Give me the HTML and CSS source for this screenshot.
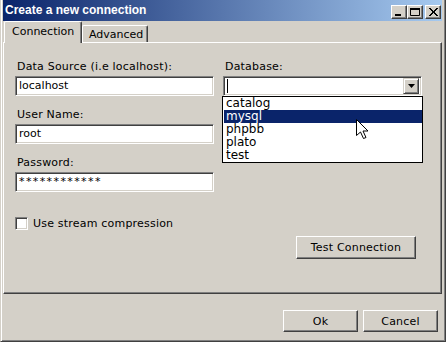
FILE: index.html
```html
<!DOCTYPE html>
<html lang="en">
<head>
    <meta charset="UTF-8">
    <title>Create a new connection</title>
    <link rel="stylesheet" href="styles.css">
</head>
<body>
    <div class="window">
        <div class="titlebar">
            <span class="title">Create a new connection</span>
            <div class="title-buttons">
                <span class="tbtn">
                    <svg width="12" height="10" viewBox="0 0 12 10"><rect x="2" y="7" width="6" height="2" fill="#000"/></svg>
                </span>
                <span class="tbtn">
                    <svg width="12" height="10" viewBox="0 0 12 10"><path d="M1.5 1.5h9v7h-9z" fill="none" stroke="#000"/><rect x="1" y="1" width="10" height="2" fill="#000"/></svg>
                </span>
                <span class="tbtn close">
                    <svg width="12" height="10" viewBox="0 0 12 10"><path d="M2 1l8 8M3 1l8 8M10 1l-8 8M11 1l-8 8" stroke="#000" stroke-width="1"/></svg>
                </span>
            </div>
        </div>

        <div class="tabs">
            <span class="tab active">Connection</span>
            <span class="tab">Advanced</span>
        </div>

        <div class="panel">
            <div class="form">
                <div class="field">
                    <label>Data Source (i.e localhost):</label>
                    <div class="textbox">localhost</div>
                </div>
                <div class="field combo-field">
                    <label>Database:</label>
                    <div class="combo">
                        <span class="caret"></span>
                        <span class="combo-button">
                            <svg width="7" height="4" viewBox="0 0 7 4"><path d="M0 0h7L3.5 4z" fill="#000"/></svg>
                        </span>
                    </div>
                    <ul class="dropdown">
                        <li>catalog</li>
                        <li class="selected">mysql</li>
                        <li>phpbb</li>
                        <li>plato</li>
                        <li>test</li>
                    </ul>
                </div>
                <div class="field">
                    <label>User Name:</label>
                    <div class="textbox">root</div>
                </div>
                <div></div>
                <div class="field">
                    <label>Password:</label>
                    <div class="textbox password">************</div>
                </div>
            </div>

            <div class="check-row">
                <span class="checkbox"></span>
                <span>Use stream compression</span>
            </div>

            <div class="test-row">
                <button class="btn test-btn">Test Connection</button>
            </div>
        </div>

        <div class="footer">
            <button class="btn">Ok</button>
            <button class="btn">Cancel</button>
        </div>

        <svg class="cursor" width="12" height="21" viewBox="0 0 12 21">
            <path d="M0.5 0.5v16l4-3.5 3 6.5 2.5-1-3-6.5h5z" fill="#fff" stroke="#000" stroke-linejoin="miter"/>
        </svg>
    </div>
</body>
</html>
```

FILE: styles.css
```css
* {
    margin: 0;
    padding: 0;
    box-sizing: border-box;
}

body {
    font-family: "DejaVu Sans", sans-serif;
    font-size: 11px;
    color: #000;
    background: #d4d0c8;
}

.window {
    position: relative;
    width: 446px;
    height: 342px;
    background: #d4d0c8;
    border-left: 1px solid #d4d0c8;
    border-right: 1px solid #404040;
    border-bottom: 1px solid #404040;
    box-shadow: inset 1px 0 #fff, inset -1px -1px #808080;
    padding: 0 3px 0 2px;
}

.titlebar {
    height: 21px;
    display: flex;
    justify-content: space-between;
    align-items: flex-start;
    background: linear-gradient(90deg, #0a246a 0%, #a6caf0 100%);
    padding: 0 1px 0 2px;
}

.title {
    font-family: "Liberation Sans", Arial, sans-serif;
    font-weight: 700;
    font-size: 12px;
    line-height: 21px;
    color: #fff;
}

.title-buttons {
    display: flex;
    margin-top: 5px;
}

.tbtn {
    width: 16px;
    height: 14px;
    display: flex;
    align-items: center;
    justify-content: center;
    background: #d4d0c8;
    border-top: 1px solid #fff;
    border-left: 1px solid #fff;
    border-right: 1px solid #404040;
    border-bottom: 1px solid #404040;
    box-shadow: inset -1px -1px #808080;
}

.tbtn.close {
    margin-left: 2px;
}

.tabs {
    display: flex;
    align-items: flex-end;
    height: 21px;
    padding-left: 1px;
}

.tab {
    position: relative;
    height: 17px;
    padding: 2px 0 0 6px;
    width: 66px;
    border-top: 1px solid #fff;
    border-left: 1px solid #fff;
    border-right: 1px solid #404040;
    box-shadow: inset -1px 0 #808080;
    border-radius: 2px 2px 0 0;
    line-height: 13px;
}

.tab.active {
    width: 78px;
    height: 22px;
    margin-bottom: -1px;
    padding: 3px 0 0 7px;
    background: #d4d0c8;
    z-index: 1;
}

.panel {
    position: relative;
    height: 252px;
    border-top: 1px solid #fff;
    border-left: 1px solid #fff;
    border-right: 1px solid #404040;
    border-bottom: 1px solid #404040;
    box-shadow: inset -1px -1px #808080;
    padding: 17px 0 0 11px;
}

.form {
    display: grid;
    grid-template-columns: 199px 199px;
    column-gap: 9px;
    row-gap: 12px;
}

.field {
    position: relative;
}

.field label {
    display: block;
    line-height: 13px;
    margin-bottom: 3px;
    padding-left: 2px;
    letter-spacing: 0.2px;
}

.textbox,
.combo {
    height: 20px;
    background: #fff;
    border-top: 1px solid #808080;
    border-left: 1px solid #808080;
    border-right: 1px solid #fff;
    border-bottom: 1px solid #fff;
    box-shadow: inset 1px 1px #404040, inset -1px -1px #d4d0c8;
    padding: 0 3px;
    line-height: 18px;
}

.textbox.password {
    letter-spacing: 1.4px;
}

.combo {
    display: flex;
    align-items: center;
    justify-content: space-between;
    padding: 0 2px 0 3px;
}

.caret {
    width: 1px;
    height: 14px;
    background: #000;
}

.combo-button {
    width: 16px;
    height: 16px;
    display: flex;
    align-items: center;
    justify-content: center;
    background: #d4d0c8;
    border-top: 1px solid #d4d0c8;
    border-left: 1px solid #d4d0c8;
    border-right: 1px solid #404040;
    border-bottom: 1px solid #404040;
    box-shadow: inset 1px 1px #fff, inset -1px -1px #808080;
}

.dropdown {
    position: absolute;
    left: -1px;
    top: 36px;
    width: 201px;
    list-style: none;
    background: #fff;
    border: 1px solid #000;
    padding-left: 1px;
    z-index: 2;
}

.dropdown li {
    height: 13px;
    line-height: 13px;
    padding-left: 2px;
    font-size: 12px;
}

.dropdown li.selected {
    background: #0a246a;
    color: #fff;
}

.check-row {
    display: flex;
    align-items: center;
    gap: 5px;
    margin-top: 25px;
    height: 13px;
    letter-spacing: 0.2px;
}

.checkbox {
    width: 13px;
    height: 13px;
    background: #fff;
    border-top: 1px solid #808080;
    border-left: 1px solid #808080;
    border-right: 1px solid #fff;
    border-bottom: 1px solid #fff;
    box-shadow: inset 1px 1px #404040, inset -1px -1px #d4d0c8;
}

.test-row {
    display: flex;
    justify-content: flex-end;
    margin-top: 6px;
    padding-right: 25px;
}

.btn {
    font-family: "DejaVu Sans", sans-serif;
    font-size: 11px;
    color: #000;
    letter-spacing: 0.2px;
    width: 75px;
    height: 22px;
    background: #d4d0c8;
    border-top: 1px solid #fff;
    border-left: 1px solid #fff;
    border-right: 1px solid #404040;
    border-bottom: 1px solid #404040;
    box-shadow: inset -1px -1px #808080;
}

.test-btn {
    width: 120px;
    height: 23px;
}

.footer {
    display: flex;
    justify-content: flex-end;
    gap: 5px;
    padding: 16px 4px 0 0;
}

.cursor {
    position: absolute;
    left: 355px;
    top: 119px;
    z-index: 3;
}
```
